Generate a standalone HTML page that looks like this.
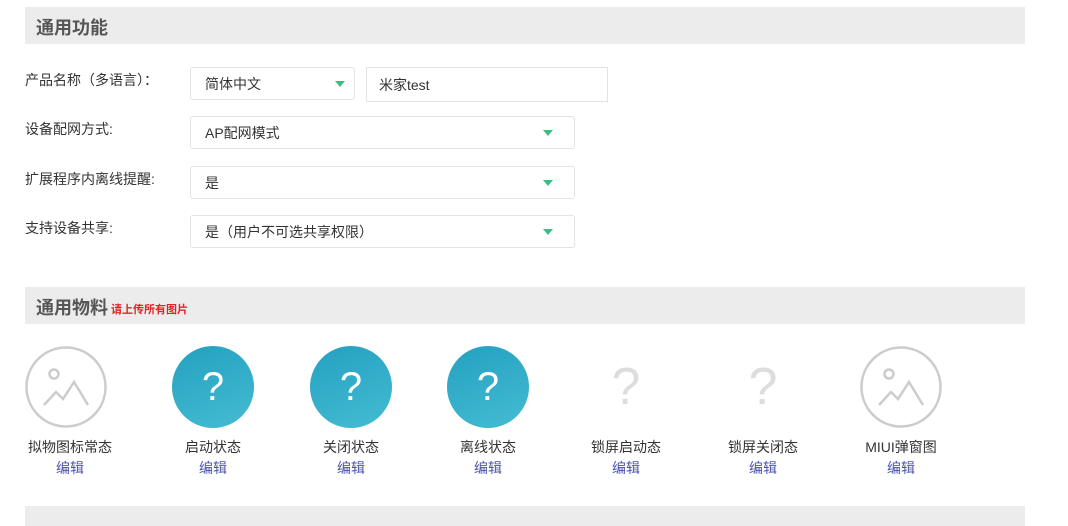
<!DOCTYPE html>
<html><head><meta charset="utf-8"><style>
body{margin:0;width:1068px;height:515px;background:#fff;position:relative;overflow:hidden;font-family:"Liberation Sans","Noto Sans CJK SC",sans-serif;color:#333}
.a{position:absolute}
.bar{position:absolute;left:25px;width:1000px;background:#ececec}
.ttl{font-size:18px;font-weight:bold;color:#555}
.lbl{font-size:14px;color:#333;left:25px}
.sel{position:absolute;border:1px solid #e3e3e3;border-radius:3px;background:#fff;box-sizing:border-box;font-size:14px;color:#333;padding-left:14px;line-height:33px}
.arr{position:absolute;top:13px;width:0;height:0;border-left:5px solid transparent;border-right:5px solid transparent;border-top:6px solid #3fbd80}
.cap{position:absolute;top:437px;width:140px;text-align:center;font-size:14px;color:#333}
.ed{position:absolute;top:458px;width:140px;text-align:center;font-size:14px;color:#4a52b0}
.tq{position:absolute;top:346px;width:82px;height:82px;border-radius:50%;background:linear-gradient(160deg,#24a0c0,#44bcd2);color:#fff;font-size:40px;line-height:82px;text-align:center}
.lq{position:absolute;top:346px;width:82px;height:82px;color:#ddd;font-size:52px;line-height:82px;text-align:center;font-weight:300}
</style></head><body>
<div class="bar" style="top:7px;height:37px"><span class="a ttl" style="left:11px;top:7px">通用功能</span></div>

<div class="a lbl" style="top:70px">产品名称（多语言）：</div>
<div class="sel" style="left:190px;top:67px;width:165px;height:33px">简体中文<div class="arr" style="left:144px"></div></div>
<div class="sel" style="left:366px;top:67px;width:242px;height:35px;border-radius:0;line-height:35px;padding-left:12px">米家test</div>

<div class="a lbl" style="top:119px">设备配网方式:</div>
<div class="sel" style="left:190px;top:116px;width:385px;height:33px">AP配网模式<div class="arr" style="left:352px"></div></div>

<div class="a lbl" style="top:169px">扩展程序内离线提醒:</div>
<div class="sel" style="left:190px;top:166px;width:385px;height:33px">是<div class="arr" style="left:352px"></div></div>

<div class="a lbl" style="top:218px">支持设备共享:</div>
<div class="sel" style="left:190px;top:215px;width:385px;height:33px">是（用户不可选共享权限）<div class="arr" style="left:352px"></div></div>

<div class="bar" style="top:287px;height:37px"><span class="a ttl" style="left:11px;top:7px">通用物料</span><span class="a" style="left:86px;top:14px;font-size:11px;font-weight:bold;color:#e8202a">请上传所有图片</span></div>

<svg class="a" style="left:25px;top:346px" width="84" height="84"><circle cx="41" cy="41" r="39.5" fill="none" stroke="#ccc" stroke-width="2.5"/><circle cx="29" cy="28" r="4.5" fill="none" stroke="#ccc" stroke-width="2.5"/><polyline points="19,59 31,46 38,53 49,36 63,59" fill="none" stroke="#ccc" stroke-width="2.5"/></svg>
<div class="tq" style="left:172px">?</div>
<div class="tq" style="left:310px">?</div>
<div class="tq" style="left:447px">?</div>
<div class="lq" style="left:585px">?</div>
<div class="lq" style="left:722px">?</div>
<svg class="a" style="left:860px;top:346px" width="84" height="84"><circle cx="41" cy="41" r="39.5" fill="none" stroke="#ccc" stroke-width="2.5"/><circle cx="29" cy="28" r="4.5" fill="none" stroke="#ccc" stroke-width="2.5"/><polyline points="19,59 31,46 38,53 49,36 63,59" fill="none" stroke="#ccc" stroke-width="2.5"/></svg>

<div class="cap" style="left:0px">拟物图标常态</div><div class="ed" style="left:0px">编辑</div>
<div class="cap" style="left:143px">启动状态</div><div class="ed" style="left:143px">编辑</div>
<div class="cap" style="left:281px">关闭状态</div><div class="ed" style="left:281px">编辑</div>
<div class="cap" style="left:418px">离线状态</div><div class="ed" style="left:418px">编辑</div>
<div class="cap" style="left:556px">锁屏启动态</div><div class="ed" style="left:556px">编辑</div>
<div class="cap" style="left:693px">锁屏关闭态</div><div class="ed" style="left:693px">编辑</div>
<div class="cap" style="left:831px">MIUI弹窗图</div><div class="ed" style="left:831px">编辑</div>

<div class="bar" style="top:506px;height:20px"></div>
</body></html>
